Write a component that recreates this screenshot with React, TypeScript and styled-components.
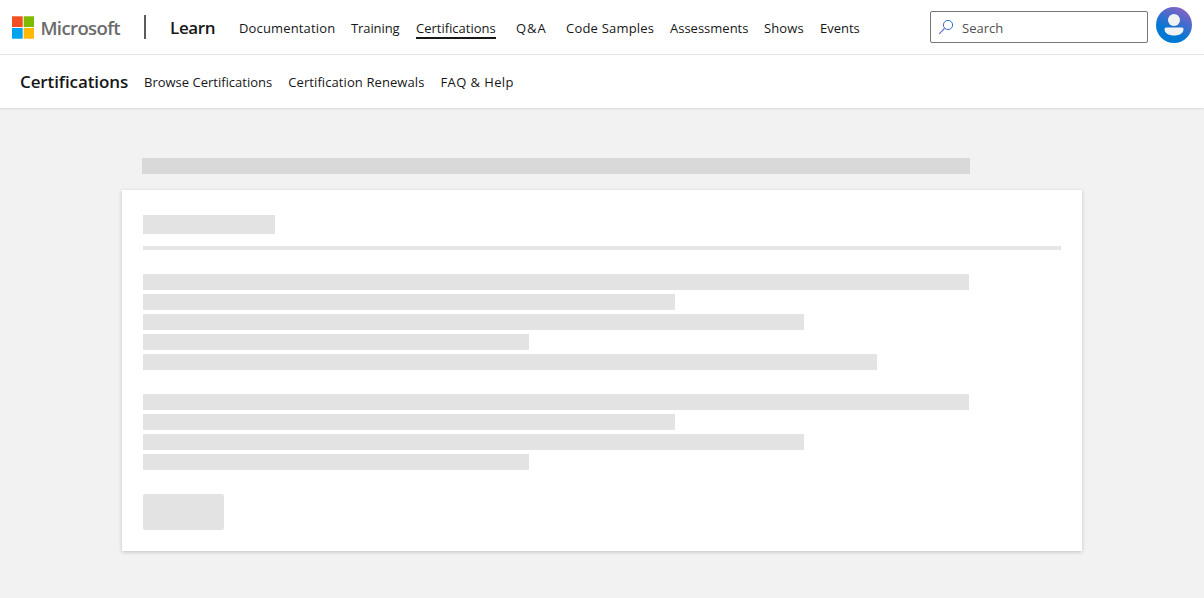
import React from 'react';
import styled, { createGlobalStyle } from 'styled-components';

const mainLinks = [
    { label: 'Documentation', width: 96, gap: 16, tracking: 0.15 },
    { label: 'Training', width: 49, gap: 16, tracking: -0.1 },
    { label: 'Certifications', width: 80, gap: 20, tracking: 0, active: true },
    { label: 'Q&A', width: 31, gap: 19, tracking: 0.9 },
    { label: 'Code Samples', width: 88, gap: 16, tracking: 0.2 },
    { label: 'Assessments', width: 78, gap: 16, tracking: 0 },
    { label: 'Shows', width: 40, gap: 16, tracking: 0.1 },
    { label: 'Events', width: 40, gap: 0, tracking: 0 },
];

const subLinks = [
    { label: 'Browse Certifications', tracking: 0 },
    { label: 'Certification Renewals', tracking: 0.09 },
    { label: 'FAQ & Help', tracking: 0.4 },
];

const firstBlock = [826, 532, 661, 386, 734];
const secondBlock = [826, 532, 661, 386];

export default function App() {
    return (
        <>
            <GlobalStyle />
            <TopBar>
                <MsLogo>
                    <svg width="23" height="23" viewBox="0 0 23 23">
                        <rect x="0" y="0" width="11" height="11" fill="#f25022" />
                        <rect x="12" y="0" width="11" height="11" fill="#7fba00" />
                        <rect x="0" y="12" width="11" height="11" fill="#00a4ef" />
                        <rect x="12" y="12" width="11" height="11" fill="#ffb900" />
                    </svg>
                    <MsName>Microsoft</MsName>
                </MsLogo>
                <Divider />
                <ProductName>Learn</ProductName>
                <MainNav>
                    {mainLinks.map((link) => (
                        <MainLink
                            key={link.label}
                            $width={link.width}
                            $gap={link.gap}
                            $tracking={link.tracking}
                            $active={link.active}
                        >
                            {link.label}
                        </MainLink>
                    ))}
                </MainNav>
                <SearchBox>
                    <svg width="16" height="16" viewBox="0 0 16 16" fill="none">
                        <defs>
                            <linearGradient id="searchStroke" x1="0" y1="16" x2="16" y2="0" gradientUnits="userSpaceOnUse">
                                <stop offset="0" stopColor="#8661c5" />
                                <stop offset="1" stopColor="#0078d4" />
                            </linearGradient>
                        </defs>
                        <circle cx="10" cy="6" r="4.6" stroke="url(#searchStroke)" strokeWidth="1" />
                        <path d="M6.6 9.4 L1.2 14.8" stroke="url(#searchStroke)" strokeWidth="1.2" />
                    </svg>
                    <SearchText>Search</SearchText>
                </SearchBox>
                <Avatar>
                    <svg width="36" height="36" viewBox="0 0 36 36">
                        <defs>
                            <linearGradient id="avatarFill" x1="28" y1="2" x2="16" y2="26" gradientUnits="userSpaceOnUse">
                                <stop offset="0" stopColor="#8661c5" />
                                <stop offset="1" stopColor="#0078d4" />
                            </linearGradient>
                        </defs>
                        <circle cx="18" cy="18" r="18" fill="url(#avatarFill)" />
                        <circle cx="18" cy="13" r="6" fill="#f2f2f2" />
                        <path d="M10 20.5 H26 A1.5 1.5 0 0 1 27.5 22 C27.5 26.5 23 28.5 18 28.5 C13 28.5 8.5 26.5 8.5 22 A1.5 1.5 0 0 1 10 20.5 Z" fill="#f2f2f2" />
                    </svg>
                </Avatar>
            </TopBar>
            <SubBar>
                <SubTitle>Certifications</SubTitle>
                <SubNav>
                    {subLinks.map((link) => (
                        <SubLink key={link.label} $tracking={link.tracking}>
                            {link.label}
                        </SubLink>
                    ))}
                </SubNav>
            </SubBar>
            <Main>
                <PageHeading />
                <Card>
                    <CardTitle />
                    <CardRule />
                    <LineGroup>
                        {firstBlock.map((w, i) => (
                            <Line key={i} $width={w} />
                        ))}
                    </LineGroup>
                    <LineGroup>
                        {secondBlock.map((w, i) => (
                            <Line key={i} $width={w} />
                        ))}
                    </LineGroup>
                    <ButtonBlock />
                </Card>
            </Main>
        </>
    );
}

const GlobalStyle = createGlobalStyle`
    html, body {
        margin: 0;
        padding: 0;
        height: 100%;
        overflow: hidden;
        background: #f2f2f2;
        font-family: "Open Sans", "Noto Sans", sans-serif;
        color: #171717;
    }
`;

const TopBar = styled.header`
    display: flex;
    align-items: center;
    height: 54px;
    padding: 0 12px;
    background: #fff;
    border-bottom: 1px solid #e6e6e6;
`;

const MsLogo = styled.div`
    display: flex;
    align-items: center;
    width: 108px;
    gap: 6px;
    flex: none;
`;

const MsName = styled.span`
    font-size: 18.5px;
    font-weight: 600;
    letter-spacing: -0.6px;
    color: #6b6b6b;
`;

const Divider = styled.div`
    width: 2px;
    height: 24px;
    margin-left: 24px;
    background: #5c5c5c;
    flex: none;
`;

const ProductName = styled.span`
    margin-left: 24px;
    width: 45px;
    font-size: 17px;
    font-weight: 600;
    letter-spacing: -0.35px;
    flex: none;
`;

const MainNav = styled.nav`
    display: flex;
    align-items: center;
    margin-left: 24px;
    flex: 1;
`;

const MainLink = styled.a<{ $width: number; $gap: number; $tracking: number; $active?: boolean }>`
    display: block;
    width: ${(p) => p.$width}px;
    margin-right: ${(p) => p.$gap}px;
    padding-top: 4px;
    font-size: 13px;
    line-height: 18px;
    letter-spacing: ${(p) => p.$tracking}px;
    white-space: nowrap;
    flex: none;
    border-bottom: 2px solid ${(p) => (p.$active ? '#171717' : 'transparent')};
`;

const SearchBox = styled.div`
    display: flex;
    align-items: center;
    gap: 8px;
    width: 218px;
    height: 32px;
    box-sizing: border-box;
    padding: 0 7px;
    border: 1px solid #757575;
    border-radius: 2px;
    flex: none;
`;

const SearchText = styled.span`
    font-size: 13px;
    line-height: 18px;
    padding-top: 1px;
    color: #505050;
`;

const Avatar = styled.div`
    display: flex;
    margin-left: 8px;
    margin-bottom: 4px;
    flex: none;
`;

const SubBar = styled.div`
    display: flex;
    align-items: center;
    height: 53px;
    padding: 0 20px;
    background: #fff;
    box-shadow: 0 1px 2px rgba(0, 0, 0, 0.1);
    position: relative;
`;

const SubTitle = styled.span`
    width: 109px;
    font-size: 17px;
    font-weight: 600;
    letter-spacing: -0.1px;
    white-space: nowrap;
    flex: none;
`;

const SubNav = styled.nav`
    display: flex;
    gap: 16px;
    margin-left: 15px;
`;

const SubLink = styled.a<{ $tracking: number }>`
    font-size: 13px;
    letter-spacing: ${(p) => p.$tracking}px;
    white-space: nowrap;
`;

const Main = styled.main`
    width: 960px;
    margin: 0 auto;
    padding-top: 50px;
`;

const PageHeading = styled.div`
    width: 828px;
    height: 16px;
    margin-left: 20px;
    margin-bottom: 16px;
    background: #d9d9d9;
`;

const Card = styled.section`
    height: 361px;
    box-sizing: border-box;
    padding: 25px 21px 0;
    background: #fff;
    box-shadow: 0 1px 4px rgba(0, 0, 0, 0.2);
`;

const CardTitle = styled.div`
    width: 132px;
    height: 19px;
    background: #e3e3e3;
`;

const CardRule = styled.div`
    height: 4px;
    margin: 12px 0 24px;
    background: #e6e6e6;
`;

const LineGroup = styled.div`
    display: flex;
    flex-direction: column;
    gap: 4px;
    margin-bottom: 24px;
`;

const Line = styled.div<{ $width: number }>`
    width: ${(p) => p.$width}px;
    height: 16px;
    background: #e3e3e3;
`;

const ButtonBlock = styled.div`
    width: 81px;
    height: 36px;
    border-radius: 2px;
    background: #e3e3e3;
`;
